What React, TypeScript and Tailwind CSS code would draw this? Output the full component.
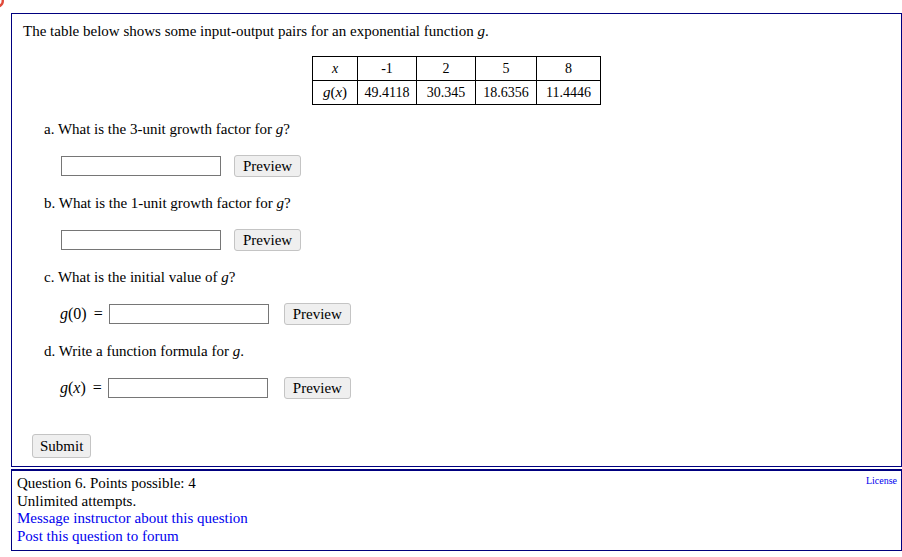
import React from "react"

const serif = { fontFamily: '"Liberation Serif", "Times New Roman", serif' }

function PreviewButton({ label = "Preview" }: { label?: string }) {
  return (
    <button
      type="button"
      className="h-[22px] rounded-[3px] border border-[#c4c4c4] bg-[#efefef] px-[8px] text-[15px] leading-none text-black"
      style={serif}
    >
      {label}
    </button>
  )
}

function Blank() {
  return <input type="text" className="h-[20px] w-[160px] border border-[#767676] bg-white" />
}

function M({ children }: { children: React.ReactNode }) {
  return <i className="italic">{children}</i>
}

const xs = ["-1", "2", "5", "8"]
const gs = ["49.4118", "30.345", "18.6356", "11.4446"]
const colW = ["w-[59px]", "w-[59px]", "w-[61px]", "w-[64px]"]

export default function App() {
  return (
    <div className="relative min-h-[557px] w-[902px] overflow-hidden bg-white text-[15px] text-black" style={serif}>
      <svg className="absolute left-[-7px] top-[-6px]" width="14" height="14" viewBox="0 0 14 14">
        <path d="M2 2 A5.5 5.5 0 1 1 2 12" fill="none" stroke="#e04a3a" strokeWidth="2.4" />
      </svg>

      <div className="ml-[11px] mt-[13px] w-[891px] border border-[#00007f] px-[11px] pb-[8px] pt-[8px]">
        <p className="h-[18px] leading-[18px]">
          The table below shows some input-output pairs for an exponential function <M>g</M>.
        </p>

        <div className="mt-[16px] flex justify-center">
          <table className="border-collapse text-[14px]">
            <tbody>
              <tr className="h-[24px]">
                <td className="w-[45px] border border-black text-center">
                  <M>x</M>
                </td>
                {xs.map((v, i) => (
                  <td key={v} className={`${colW[i]} border border-black text-center`}>
                    {v}
                  </td>
                ))}
              </tr>
              <tr className="h-[24px]">
                <td className="border border-black text-center text-[15px]">
                  <M>g</M>(<M>x</M>)
                </td>
                {gs.map((v, i) => (
                  <td key={v} className={`${colW[i]} border border-black text-center`}>
                    {v}
                  </td>
                ))}
              </tr>
            </tbody>
          </table>
        </div>

        <div className="ml-[21px]">
          <div className="mt-[15px] h-[18px] leading-[18px]">
            a. What is the 3-unit growth factor for <M>g</M>?
          </div>
          <div className="mt-[17px] flex h-[22px] items-center gap-[13px] pl-[17px]">
            <Blank />
            <PreviewButton />
          </div>

          <div className="mt-[17px] h-[18px] leading-[18px]">
            b. What is the 1-unit growth factor for <M>g</M>?
          </div>
          <div className="mt-[17px] flex h-[22px] items-center gap-[13px] pl-[17px]">
            <Blank />
            <PreviewButton />
          </div>

          <div className="mt-[17px] h-[18px] leading-[18px]">
            c. What is the initial value of <M>g</M>?
          </div>
          <div className="mt-[17px] flex h-[22px] items-center pl-[16px] leading-[18px]">
            <span className="mr-[6px] text-[16px]">
              <M>g</M>(0) <span className="ml-[3px]">=</span>
            </span>
            <Blank />
            <span className="ml-[15px] flex">
              <PreviewButton />
            </span>
          </div>

          <div className="mt-[17px] h-[18px] leading-[18px]">
            d. Write a function formula for <M>g</M>.
          </div>
          <div className="mt-[17px] flex h-[22px] items-center pl-[16px] leading-[18px]">
            <span className="mr-[6px] text-[16px]">
              <M>g</M>(<M>x</M>) <span className="ml-[3px]">=</span>
            </span>
            <Blank />
            <span className="ml-[16px] flex">
              <PreviewButton />
            </span>
          </div>
        </div>

        <div className="mt-[35px] flex pl-[9px]">
          <button
            type="button"
            className="h-[24px] rounded-[3px] border border-[#c4c4c4] bg-[#efefef] px-[7px] text-[15px] leading-none"
            style={serif}
          >
            Submit
          </button>
        </div>
      </div>

      <div className="ml-[11px] mt-[2px] w-[891px] border border-t-2 border-[#00007f] px-[5px] pb-[5px] pt-[4px] text-[15px] leading-[17.5px]">
        <a className="float-right mr-[-1px] mt-[-1px] text-[10px] leading-[14px] text-[#0000ee]">License</a>
        <div>Question 6. Points possible: 4</div>
        <div>Unlimited attempts.</div>
        <div className="text-[#0000ee]">Message instructor about this question</div>
        <div className="text-[#0000ee]">Post this question to forum</div>
      </div>
    </div>
  )
}
